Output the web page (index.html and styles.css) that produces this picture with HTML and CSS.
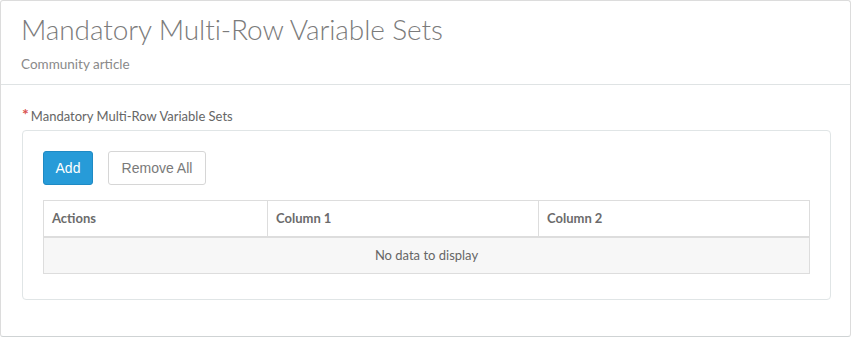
FILE: index.html
```html
<!DOCTYPE html>
<html>
<head>
<meta charset="utf-8">
<link rel="stylesheet" href="styles.css">
</head>
<body>
<div class="card">
  <div class="card-header">
    <h1 class="title">Mandatory Multi-Row Variable Sets</h1>
    <div class="subtitle">Community article</div>
  </div>
  <div class="card-body">
    <div class="field-label"><span class="req">*</span>Mandatory Multi-Row Variable Sets</div>
    <div class="mrvs">
      <div class="toolbar">
        <button class="btn btn-primary">Add</button>
        <button class="btn btn-default">Remove All</button>
      </div>
      <table class="grid">
        <thead>
          <tr><th class="c1">Actions</th><th class="c2">Column 1</th><th>Column 2</th></tr>
        </thead>
        <tbody>
          <tr><td colspan="3" class="empty">No data to display</td></tr>
        </tbody>
      </table>
    </div>
  </div>
</div>
</body>
</html>
```
FILE: styles.css
```css
html, body { margin: 0; padding: 0; background: #fff; }
body { font-family: "Source Sans Pro", Lato, "Open Sans", sans-serif; color: #666; }
.card {
  width: 849px;
  height: 335px;
  border: 1px solid #dcdcdc;
  border-bottom-color: #cfd3d4;
  border-radius: 3px;
  box-sizing: content-box;
}
.card-header {
  height: 83px;
  border-bottom: 1px solid #dfe3e4;
  padding: 0 20px;
  box-sizing: content-box;
}
.title {
  margin: 0;
  padding-top: 11px;
  font-family: Lato, sans-serif;
  font-weight: 300;
  font-size: 28px;
  line-height: 34px;
  color: #7b7b7b;
  letter-spacing: -0.1px;
}
.subtitle {
  margin-top: 10px;
  font-size: 13.5px;
  line-height: 16px;
  color: #8a8a8a;
  font-family: Lato, sans-serif;
}
.card-body { padding: 22px 20px 0 21px; }
.field-label {
  font-family: Lato, sans-serif;
  font-size: 13px;
  line-height: 16px;
  color: #666;
  height: 16px;
}
.req { color: #d9534f; font-size: 16px; font-weight: bold; margin-right: 2px; position: relative; top: -1px; }
.mrvs {
  margin-top: 7px;
  width: 809px;
  height: 170px;
  border: 1px solid #e0e5e6;
  border-radius: 4px;
  padding: 20px 20px 0 20px;
  box-sizing: border-box;
}
.toolbar { display: flex; gap: 15px; height: 34px; }
.btn {
  height: 34px;
  font-family: "Liberation Sans", Arial, sans-serif;
  font-size: 14px;
  border-radius: 3px;
  padding: 0;
  cursor: pointer;
}
.btn-primary { background: #279bd8; color: #fff; border: 1px solid #1f8ac4; width: 50px; }
.btn-default { background: #fff; color: #7a7a7a; border: 1px solid #d6d6d6; width: 98px; }
.grid {
  margin-top: 15px;
  width: 767px;
  border-collapse: collapse;
  font-family: Lato, sans-serif;
  font-size: 13px;
}
.grid th {
  text-align: left;
  font-weight: bold;
  color: #6b6b6b;
  height: 36px;
  padding: 0 8px;
  border: 1px solid #dddddd;
  border-bottom: 2px solid #dddddd;
  box-sizing: border-box;
}
.grid th.c1 { width: 224px; }
.grid th.c2 { width: 271px; }
.grid td.empty {
  background: #f7f7f7;
  border: 1px solid #dddddd;
  text-align: center;
  height: 35px;
  color: #666;
  padding: 0;
}
```
